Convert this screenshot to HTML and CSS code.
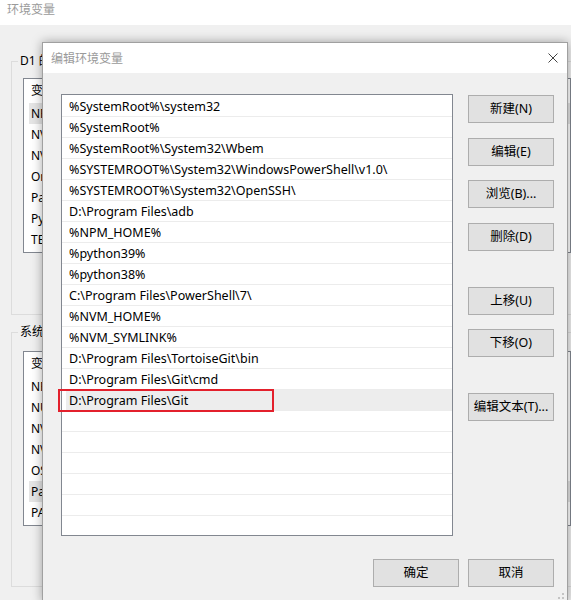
FILE: index.html
```html
<!DOCTYPE html>
<html lang="zh-CN">
<head>
<meta charset="utf-8">
<title>编辑环境变量</title>
<link rel="stylesheet" href="styles.css">
</head>
<body>
<div class="bgwin">
  <div class="bg-title">环境变量</div>
  <div class="bg-body">
    <fieldset class="group group-user">
      <legend>D1 的用户变量(U)</legend>
      <div class="bg-list">
        <div class="bg-head">变量</div>
        <div class="bg-row sel">NPM_HOME</div>
        <div class="bg-row">NVM_HOME</div>
        <div class="bg-row">NVM_SYMLINK</div>
        <div class="bg-row">OneDrive</div>
        <div class="bg-row">Path</div>
        <div class="bg-row">PyCharm</div>
        <div class="bg-row">TEMP</div>
        <div class="bg-row">TMP</div>
      </div>
    </fieldset>
    <fieldset class="group group-sys">
      <legend>系统变量(S)</legend>
      <div class="bg-list">
        <div class="bg-head">变量</div>
        <div class="bg-row">NPM_HOME</div>
        <div class="bg-row">NUMBER_OF_PROCESSORS</div>
        <div class="bg-row">NVM_HOME</div>
        <div class="bg-row">NVM_SYMLINK</div>
        <div class="bg-row">OS</div>
        <div class="bg-row sel">Path</div>
        <div class="bg-row">PATHEXT</div>
      </div>
    </fieldset>
  </div>
</div>

<div class="dialog">
  <div class="dlg-title">
    <span>编辑环境变量</span>
    <svg class="close" width="10" height="10" viewBox="0 0 10 10" aria-label="关闭"><path d="M0.5 0.5 L9.5 9.5 M9.5 0.5 L0.5 9.5" stroke="#444" stroke-width="1" fill="none"/></svg>
  </div>
  <div class="dlg-body">
    <div class="dlg-main">
      <div class="list-wrap">
        <div class="list">
          <div class="row">%SystemRoot%\system32</div>
          <div class="row">%SystemRoot%</div>
          <div class="row">%SystemRoot%\System32\Wbem</div>
          <div class="row">%SYSTEMROOT%\System32\WindowsPowerShell\v1.0\</div>
          <div class="row">%SYSTEMROOT%\System32\OpenSSH\</div>
          <div class="row">D:\Program Files\adb</div>
          <div class="row">%NPM_HOME%</div>
          <div class="row">%python39%</div>
          <div class="row">%python38%</div>
          <div class="row">C:\Program Files\PowerShell\7\</div>
          <div class="row">%NVM_HOME%</div>
          <div class="row">%NVM_SYMLINK%</div>
          <div class="row">D:\Program Files\TortoiseGit\bin</div>
          <div class="row">D:\Program Files\Git\cmd</div>
          <div class="row sel">D:\Program Files\Git</div>
          <div class="row"></div>
          <div class="row"></div>
          <div class="row"></div>
          <div class="row"></div>
          <div class="row"></div>
          <div class="row"></div>
        </div>
        <div class="mark"></div>
      </div>
      <div class="side">
        <button class="btn">新建(N)</button>
        <button class="btn gap-m">编辑(E)</button>
        <button class="btn gap-s">浏览(B)...</button>
        <button class="btn gap-m">删除(D)</button>
        <button class="btn gap-l">上移(U)</button>
        <button class="btn gap-s">下移(O)</button>
        <button class="btn gap-l">编辑文本(T)...</button>
      </div>
    </div>
    <div class="footer">
      <button class="btn">确定</button>
      <button class="btn">取消</button>
    </div>
  </div>
  <svg class="grip" width="7" height="7" viewBox="0 0 7 7"><rect x="5" y="0" width="2" height="2" fill="#c4c4c4"/><rect x="1" y="4" width="2" height="2" fill="#c4c4c4"/><rect x="5" y="4" width="2" height="2" fill="#c4c4c4"/></svg>
</div>
</body>
</html>
```
FILE: styles.css
```css
html, body {
  margin: 0;
  height: 100%;
  overflow: hidden;
}
body {
  position: relative;
  background: #f0f0f0;
  font-family: "Noto Sans", "Noto Sans CJK SC", sans-serif;
  font-size: 12px;
  color: #000;
}

/* background window */
.bgwin {
  width: 571px;
  height: 600px;
  overflow: hidden;
}
.bg-title {
  height: 25px;
  background: #fff;
  color: #9a9a9a;
  padding-left: 7px;
  line-height: 18px;
  font-family: "Noto Sans CJK SC", sans-serif;
}
.bg-body {
  width: 600px;
  padding-top: 28px;
}
.group {
  margin: 0 0 0 11px;
  border: 1px solid #dcdcdc;
  padding: 9px 28px 61px 11px;
  min-width: 0;
}
.group-sys {
  margin-top: 9px;
  padding-top: 11px;
  padding-bottom: 60px;
}
.group legend {
  padding: 0 2px;
  margin-left: -5px;
  line-height: 16px;
}
.bg-list {
  height: 175px;
  box-sizing: border-box;
  border: 1px solid #828790;
  background: #fff;
  overflow: hidden;
}
.bg-head {
  height: 24px;
  line-height: 24px;
  padding-left: 7px;
}
.bg-row {
  height: 21px;
  line-height: 21px;
  margin-left: 5px;
  padding-left: 2px;
  white-space: nowrap;
}
.bg-row.sel {
  background: #e5e5e5;
}

/* dialog */
.dialog {
  position: absolute;
  left: 42px;
  top: 42px;
  width: 526px;
  height: 560px;
  box-sizing: border-box;
  border: 1px solid #a0a0a0;
  border-bottom: none;
  background: #f0f0f0;
  box-shadow: 0 0 10px rgba(0, 0, 0, 0.35);
}
.dlg-title {
  height: 30px;
  box-sizing: border-box;
  padding: 0 9px 2px 8px;
  background: #fff;
  display: flex;
  align-items: center;
  justify-content: space-between;
  color: #9a9a9a;
  font-family: "Noto Sans CJK SC", sans-serif;
}
.close {
  display: block;
  margin-top: 1px;
}
.dlg-body {
  padding: 21px 13px 0 18px;
}
.dlg-main {
  display: flex;
  gap: 15px;
}
.list-wrap {
  position: relative;
  width: 392px;
  height: 442px;
  flex: none;
}
.list {
  box-sizing: border-box;
  height: 100%;
  border: 1px solid #828790;
  background: #fff;
  overflow: hidden;
  padding-top: 1px;
}
.row {
  height: 21px;
  box-sizing: border-box;
  border-bottom: 1px solid #ececec;
  padding: 1px 0 0 7px;
  line-height: 19px;
  font-size: 12.5px;
  white-space: nowrap;
}
.row.sel {
  background: linear-gradient(90deg, #fff 4px, #ededed 4px);
}
.mark {
  position: absolute;
  left: -3px;
  top: 295px;
  width: 216px;
  height: 23px;
  box-sizing: border-box;
  border: 2px solid #e3202c;
}
.side {
  display: flex;
  flex-direction: column;
  padding-top: 1px;
  width: 86px;
}
.btn {
  width: 86px;
  height: 28px;
  margin: 0;
  padding: 0;
  box-sizing: border-box;
  border: 1px solid #adadad;
  border-radius: 0;
  background: #e1e1e1;
  color: #000;
  font-family: "Noto Sans", "Noto Sans CJK SC", sans-serif;
  font-size: 12.5px;
  line-height: 16px;
  display: flex;
  align-items: center;
  justify-content: center;
}
.gap-s { margin-top: 14px; }
.gap-m { margin-top: 15px; }
.gap-l { margin-top: 36px; }
.footer {
  display: flex;
  justify-content: flex-end;
  gap: 9px;
  margin-top: 23px;
}
.grip {
  position: absolute;
  right: 3px;
  bottom: 2px;
}
```
